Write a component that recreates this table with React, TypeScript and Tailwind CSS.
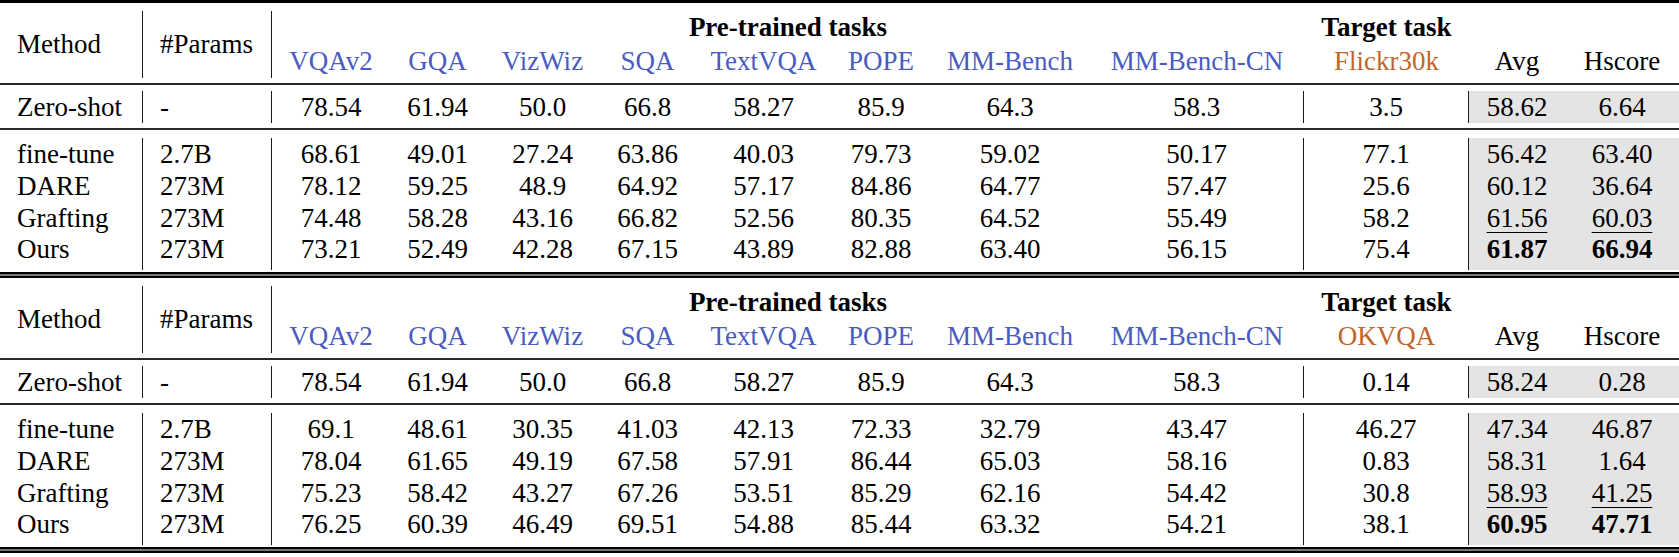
import clsx from "clsx";

const GRID =
  "grid grid-cols-[143px_129px_118px_95px_115px_95px_137px_98px_160px_214px_165px_96px_114px]";

const TASKS = [
  "VQAv2",
  "GQA",
  "VizWiz",
  "SQA",
  "TextVQA",
  "POPE",
  "MM-Bench",
  "MM-Bench-CN",
];

type TableData = {
  target: string;
  zero: string[];
  rows: string[][];
};

const tables: TableData[] = [
  {
    target: "Flickr30k",
    zero: ["Zero-shot", "-", "78.54", "61.94", "50.0", "66.8", "58.27", "85.9", "64.3", "58.3", "3.5", "58.62", "6.64"],
    rows: [
      ["fine-tune", "2.7B", "68.61", "49.01", "27.24", "63.86", "40.03", "79.73", "59.02", "50.17", "77.1", "56.42", "63.40"],
      ["DARE", "273M", "78.12", "59.25", "48.9", "64.92", "57.17", "84.86", "64.77", "57.47", "25.6", "60.12", "36.64"],
      ["Grafting", "273M", "74.48", "58.28", "43.16", "66.82", "52.56", "80.35", "64.52", "55.49", "58.2", "_61.56", "_60.03"],
      ["Ours", "273M", "73.21", "52.49", "42.28", "67.15", "43.89", "82.88", "63.40", "56.15", "75.4", "*61.87", "*66.94"],
    ],
  },
  {
    target: "OKVQA",
    zero: ["Zero-shot", "-", "78.54", "61.94", "50.0", "66.8", "58.27", "85.9", "64.3", "58.3", "0.14", "58.24", "0.28"],
    rows: [
      ["fine-tune", "2.7B", "69.1", "48.61", "30.35", "41.03", "42.13", "72.33", "32.79", "43.47", "46.27", "47.34", "46.87"],
      ["DARE", "273M", "78.04", "61.65", "49.19", "67.58", "57.91", "86.44", "65.03", "58.16", "0.83", "58.31", "1.64"],
      ["Grafting", "273M", "75.23", "58.42", "43.27", "67.26", "53.51", "85.29", "62.16", "54.42", "30.8", "_58.93", "_41.25"],
      ["Ours", "273M", "76.25", "60.39", "46.49", "69.51", "54.88", "85.44", "63.32", "54.21", "38.1", "*60.95", "*47.71"],
    ],
  },
];

// "_" prefix = underlined (second best), "*" prefix = bold (best)
function Value({ v }: { v: string }) {
  if (v.startsWith("_"))
    return <span className="underline decoration-1 underline-offset-[5px]">{v.slice(1)}</span>;
  if (v.startsWith("*")) return <span className="font-bold">{v.slice(1)}</span>;
  return <span>{v}</span>;
}

function BodyRow({ cells, last }: { cells: string[]; last?: boolean }) {
  return (
    <div className={clsx(GRID, last ? "h-[36px]" : "h-[32px]")}>
      {cells.map((c, i) => (
        <div
          key={i}
          className={clsx(
            "flex h-full",
            last ? "items-start" : "items-center",
            last && "pt-[2px]",
            i < 2 ? "pl-[17px]" : "justify-center",
            (i < 2 || i === 9 || i === 10) && "border-r border-[#1c1c1c]",
            i >= 11 && "bg-[#e4e4e4]"
          )}
        >
          <Value v={c} />
        </div>
      ))}
    </div>
  );
}

function Header({ target }: { target: string }) {
  return (
    <div className="pt-[8px] pb-[5px]">
      <div className={clsx(GRID, "grid-rows-[33px_34px]")}>
        <div className="row-span-2 flex items-center pl-[17px] border-r border-[#1c1c1c]">Method</div>
        <div className="row-span-2 flex items-center pl-[17px] border-r border-[#1c1c1c]">#Params</div>
        <div className="col-span-8 flex items-center justify-center font-bold">Pre-trained tasks</div>
        <div className="flex items-center justify-center font-bold">Target task</div>
        <div className="col-span-2" />
        {TASKS.map((t) => (
          <div key={t} className="flex items-center justify-center text-[#4a5cbf]">
            {t}
          </div>
        ))}
        <div className="flex items-center justify-center text-[#c2652b]">{target}</div>
        <div className="flex items-center justify-center">Avg</div>
        <div className="flex items-center justify-center">Hscore</div>
      </div>
    </div>
  );
}

function ResultTable({ data }: { data: TableData }) {
  return (
    <div>
      <Header target={data.target} />
      <div className="h-[2px] bg-[#2a2a2a]" />
      <div className="pt-[6px] pb-[5px]">
        <BodyRow cells={data.zero} />
      </div>
      <div className="h-[2px] bg-[#2a2a2a]" />
      <div className="pt-[8px] pb-[2px]">
        {data.rows.map((r, i) => (
          <BodyRow key={i} cells={r} last={i === data.rows.length - 1} />
        ))}
      </div>
    </div>
  );
}

export default function App() {
  return (
    <div className="w-[1679px] h-[557px] bg-white text-black font-['Liberation_Serif',serif] text-[27px] leading-none">
      <div className="h-[3px] bg-black" />
      <ResultTable data={tables[0]} />
      <div className="h-[6px] border-y-2 border-black bg-[#777]" />
      <ResultTable data={tables[1]} />
      <div className="h-[6px] border-y-2 border-black bg-[#777]" />
    </div>
  );
}
